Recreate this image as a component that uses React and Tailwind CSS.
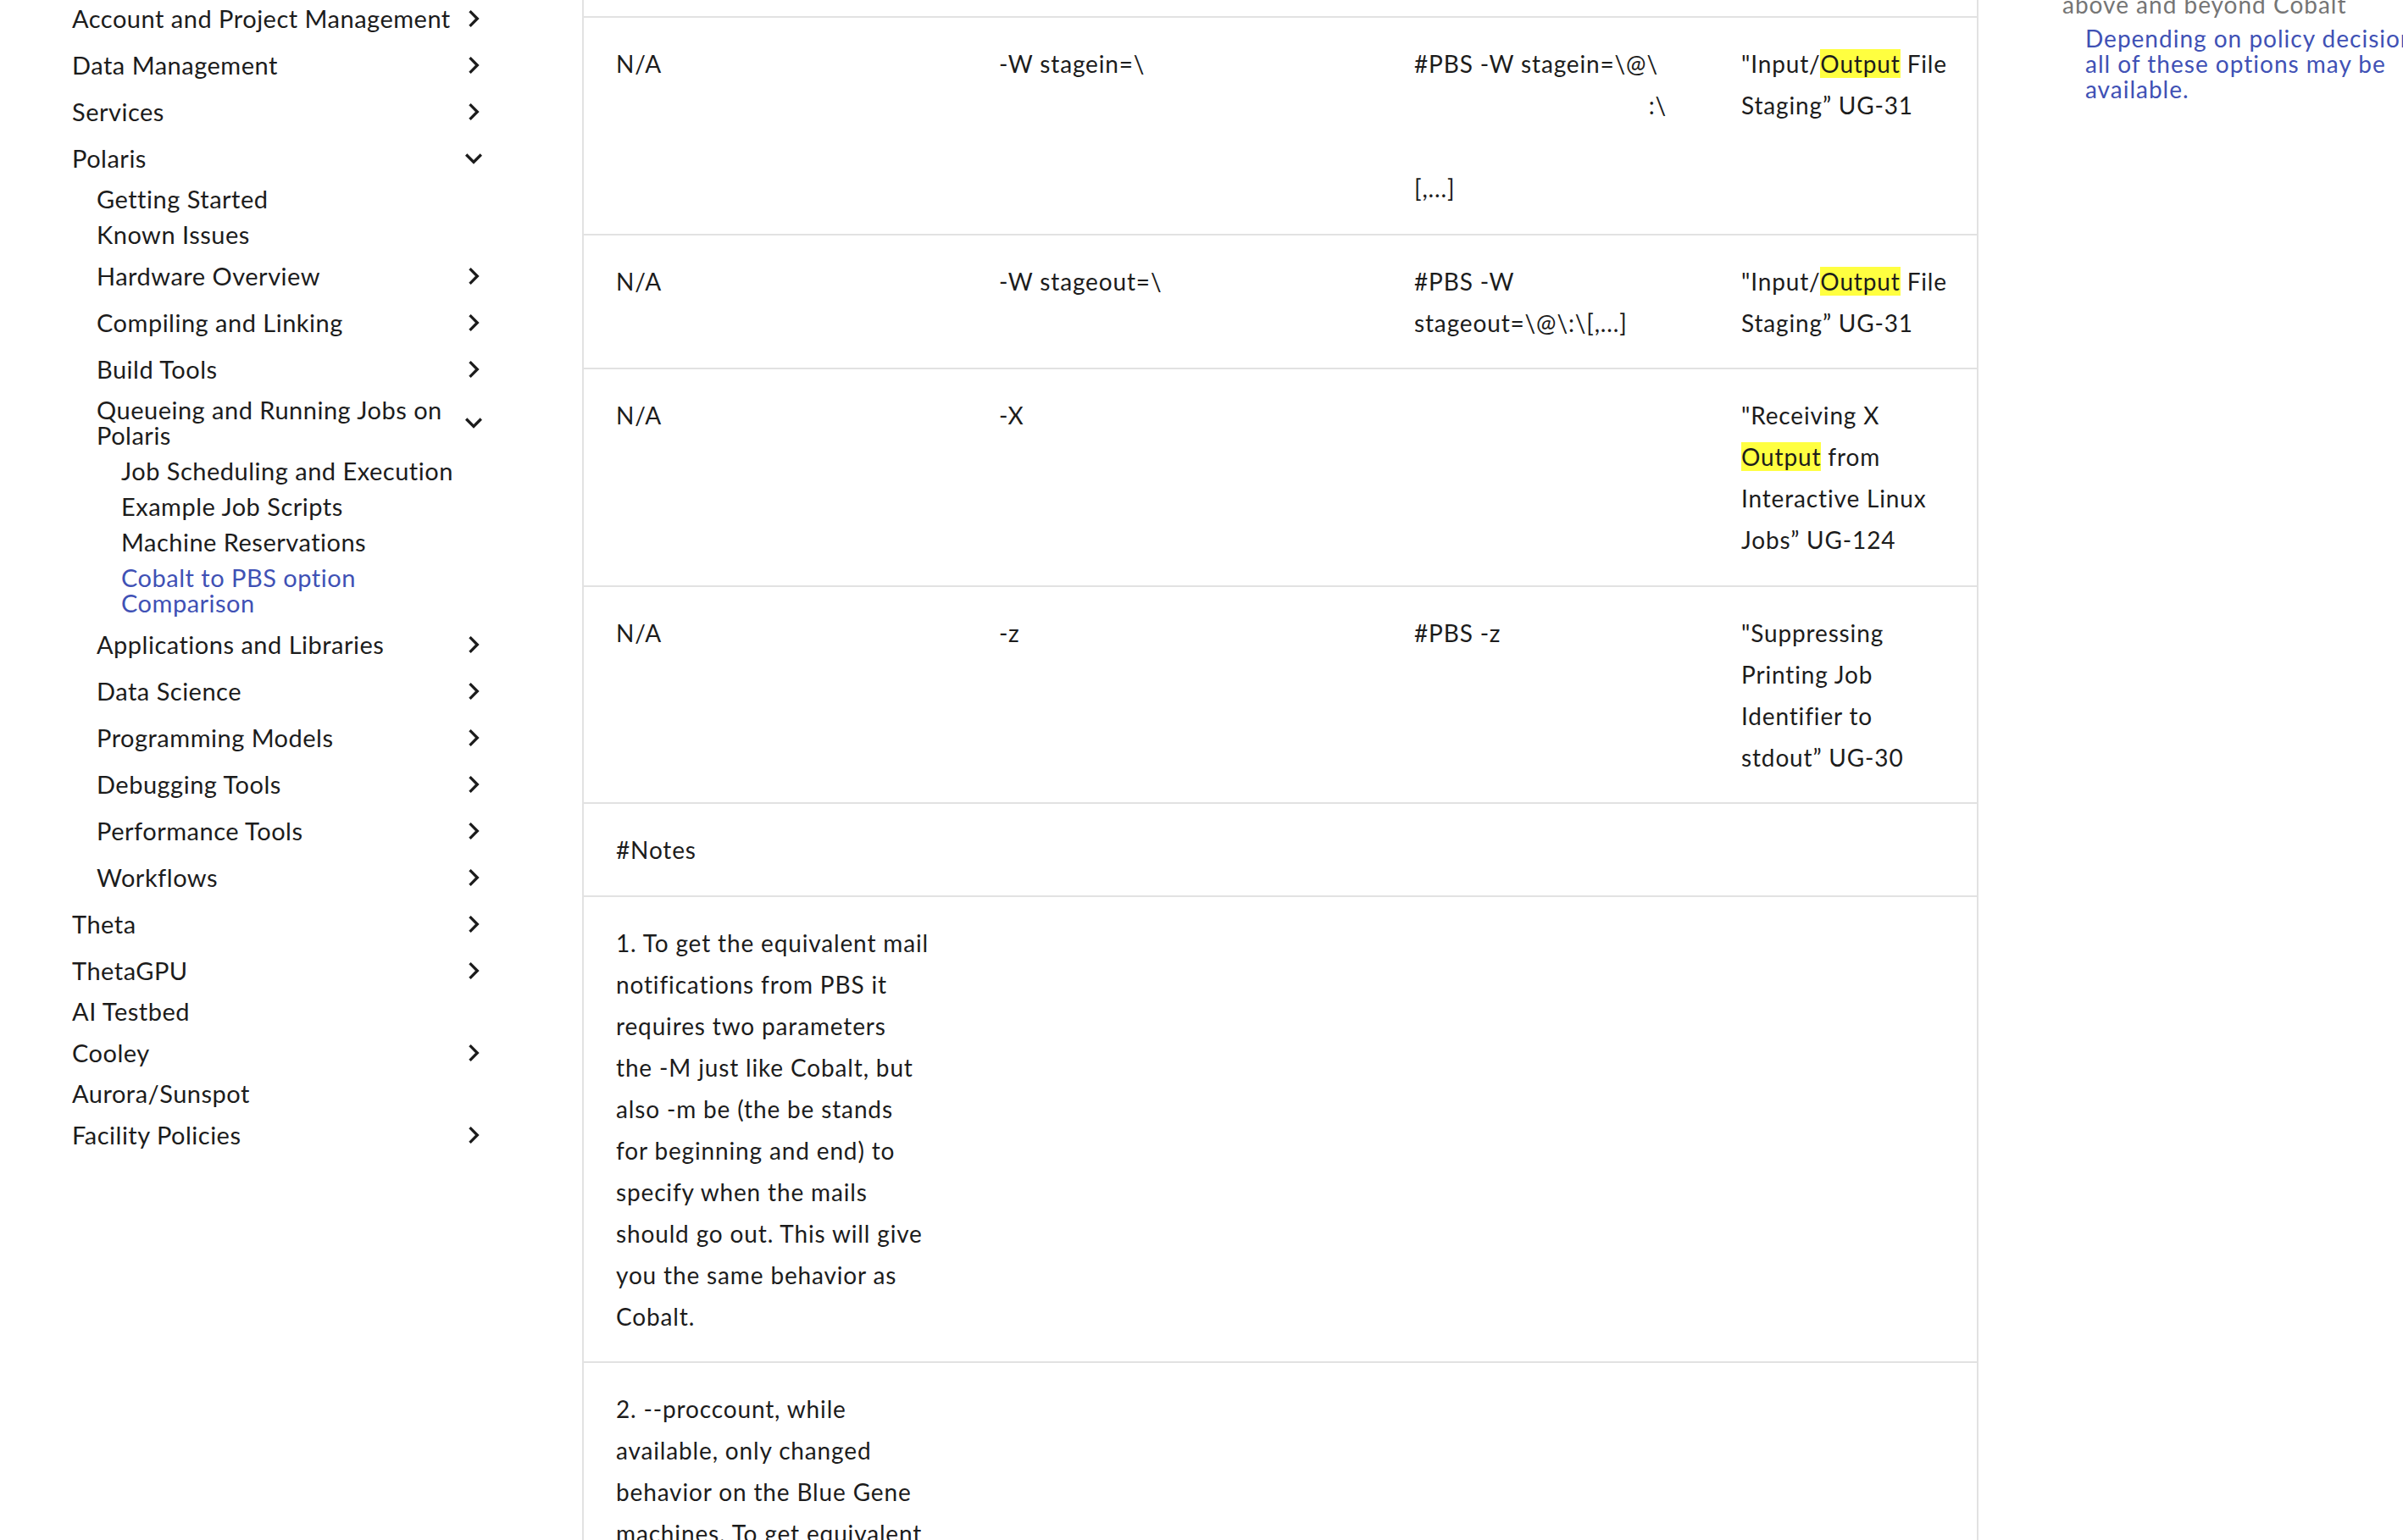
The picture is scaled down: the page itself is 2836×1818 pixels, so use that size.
import React from "react";

const nav = [
  { label: "Account and Project Management", level: 0, icon: "right" },
  { label: "Data Management", level: 0, icon: "right" },
  { label: "Services", level: 0, icon: "right" },
  { label: "Polaris", level: 0, icon: "down" },
  { label: "Getting Started", level: 1 },
  { label: "Known Issues", level: 1 },
  { label: "Hardware Overview", level: 1, icon: "right" },
  { label: "Compiling and Linking", level: 1, icon: "right" },
  { label: "Build Tools", level: 1, icon: "right" },
  { label: ["Queueing and Running Jobs on", "Polaris"], level: 1, icon: "down" },
  { label: "Job Scheduling and Execution", level: 2 },
  { label: "Example Job Scripts", level: 2 },
  { label: "Machine Reservations", level: 2 },
  { label: ["Cobalt to PBS option", "Comparison"], level: 2, active: true },
  { label: "Applications and Libraries", level: 1, icon: "right" },
  { label: "Data Science", level: 1, icon: "right" },
  { label: "Programming Models", level: 1, icon: "right" },
  { label: "Debugging Tools", level: 1, icon: "right" },
  { label: "Performance Tools", level: 1, icon: "right" },
  { label: "Workflows", level: 1, icon: "right" },
  { label: "Theta", level: 0, icon: "right" },
  { label: "ThetaGPU", level: 0, icon: "right" },
  { label: "AI Testbed", level: 0 },
  { label: "Cooley", level: 0, icon: "right" },
  { label: "Aurora/Sunspot", level: 0 },
  { label: "Facility Policies", level: 0, icon: "right" },
];

const indent = ["pl-0", "pl-[29px]", "pl-[58px]"];

function Chevron({ dir }) {
  return (
    <svg viewBox="0 0 24 24" className="w-[40px] h-[40px] shrink-0 fill-[#1c1c1c]">
      {dir === "down" ? (
        <path d="M7.41 8.58 12 13.17l4.59-4.59L18 10l-6 6-6-6 1.41-1.42Z" />
      ) : (
        <path d="M8.59 16.58 13.17 12 8.59 7.41 10 6l6 6-6 6-1.41-1.42Z" />
      )}
    </svg>
  );
}

function NavItem({ item }) {
  const lines = Array.isArray(item.label) ? item.label : [item.label];
  return (
    <div
      className={`flex items-center justify-between py-[6px] ${item.icon ? "min-h-[55px]" : "min-h-[42px]"} ${indent[item.level]}`}
    >
      <span className={`leading-[30px] ${item.active ? "text-[#4051b5]" : "text-[#1c1c1c]"}`}>
        {lines.map((l, i) => (
          <span key={i} className="block whitespace-nowrap">{l}</span>
        ))}
      </span>
      {item.icon && <Chevron dir={item.icon} />}
    </div>
  );
}

function Mark({ children }) {
  return <span className="bg-[#ffff40]">{children}</span>;
}

function Lines({ lines }) {
  return (
    <div>
      {lines.map((l, i) => (
        <div key={i} className="whitespace-nowrap min-h-[49px]">{l}</div>
      ))}
    </div>
  );
}

const rows = [
  [
    ["N/A"],
    ["-W stagein=\\"],
    [
      "#PBS -W stagein=\\@\\",
      <div className="text-right pr-[12px]">:\</div>,
      "",
      "[,...]",
    ],
    [<>"Input/<Mark>Output</Mark> File</>, "Staging” UG-31"],
  ],
  [
    ["N/A"],
    ["-W stageout=\\"],
    ["#PBS -W", "stageout=\\@\\:\\[,...]"],
    [<>"Input/<Mark>Output</Mark> File</>, "Staging” UG-31"],
  ],
  [
    ["N/A"],
    ["-X"],
    [],
    ['"Receiving X', <><Mark>Output</Mark> from</>, "Interactive Linux", "Jobs” UG-124"],
  ],
  [
    ["N/A"],
    ["-z"],
    ["#PBS -z"],
    ['"Suppressing', "Printing Job", "Identifier to", "stdout” UG-30"],
  ],
  [["#Notes"], [], [], []],
  [
    [
      "1. To get the equivalent mail",
      "notifications from PBS it",
      "requires two parameters",
      "the -M just like Cobalt, but",
      "also -m be (the be stands",
      "for beginning and end) to",
      "specify when the mails",
      "should go out. This will give",
      "you the same behavior as",
      "Cobalt.",
    ],
    [],
    [],
    [],
  ],
  [
    [
      "2. --proccount, while",
      "available, only changed",
      "behavior on the Blue Gene",
      "machines. To get equivalent",
    ],
    [],
    [],
    [],
  ],
];

export default function App() {
  return (
    <div
      className="w-[2836px] h-[1818px] overflow-hidden bg-white flex"
      style={{ fontFamily: "Lato, 'Noto Sans', sans-serif" }}
    >
      {/* left navigation */}
      <nav className="w-[687px] shrink-0 pl-[85px] pr-[108px] mt-[-6px] text-[29px] tracking-[0.5px]">
        {nav.map((item, i) => (
          <NavItem key={i} item={item} />
        ))}
      </nav>

      {/* comparison table */}
      <main className="w-[1648px] shrink-0 border-l-2 border-r-2 border-[#e2e2e2] text-[28px] tracking-[0.85px] leading-[49px] text-[#1c1c1c]">
        <div className="h-[19px]" />
        {rows.map((row, r) => (
          <div key={r} className="grid grid-cols-[452px_490px_386px_1fr] border-t-2 border-[#e2e2e2]">
            {row.map((cell, c) => (
              <div key={c} className="pl-[38px] pr-[38px] pt-[30px] pb-[28.5px] min-h-[49px]">
                <Lines lines={cell} />
              </div>
            ))}
          </div>
        ))}
      </main>

      {/* table of contents */}
      <aside className="w-[420px] shrink-0 pl-[99px] text-[28px] tracking-[1px] leading-[30px]">
        <div className="mt-[-10px] text-[#757575] whitespace-nowrap">above and beyond Cobalt</div>
        <div className="mt-[10px] pl-[27px] text-[#4051b5] whitespace-nowrap">
          Depending on policy decisions,
          <br />
          all of these options may be
          <br />
          available.
        </div>
      </aside>
    </div>
  );
}
